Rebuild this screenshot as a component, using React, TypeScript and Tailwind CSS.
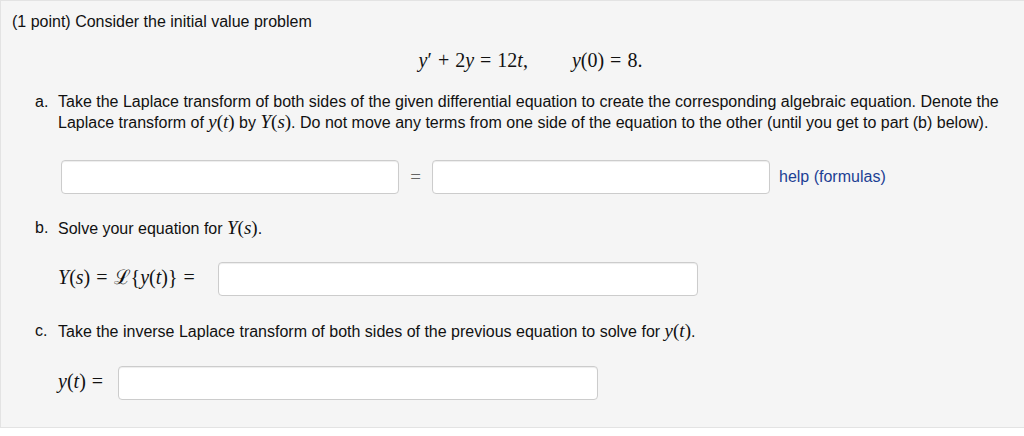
import React from 'react';

const serif = "font-['Liberation_Serif','DejaVu_Serif',serif]";

function V({ children }: { children: React.ReactNode }) {
  return <i className="italic">{children}</i>;
}

function Op({ children }: { children: React.ReactNode }) {
  return <span className="mx-[6px]">{children}</span>;
}

function Math({ children, className = '' }: { children: React.ReactNode; className?: string }) {
  return <span className={`${serif} text-[19px] leading-none whitespace-nowrap ${className}`}>{children}</span>;
}

function Field({ className = '' }: { className?: string }) {
  return (
    <input
      type="text"
      className={`h-[34px] bg-white border border-[#cccccc] rounded-[4px] shadow-[inset_0_1px_1px_rgba(0,0,0,0.075)] outline-none ${className}`}
    />
  );
}

export default function App() {
  return (
    <div className="w-[1024px] h-[436px] bg-white font-['Liberation_Sans',Arial,sans-serif] text-[16px] text-[#111]">
      <div className="h-[428px] bg-[#f5f5f5] border-l border-t border-b border-[#e3e3e3] pl-[11px] pt-[11px]">
        <p className="h-5 leading-5">(1 point) Consider the initial value problem</p>

        <div className="mt-[16px] h-6 flex items-center justify-center pl-[25px]">
          <Math className="text-[20px]">
            <V>y</V>′<Op>+</Op>2<V>y</V><Op>=</Op>12<V>t</V>,
          </Math>
          <span className="w-[44px]" />
          <Math className="text-[20px]">
            <V>y</V>(0)<Op>=</Op>8.
          </Math>
        </div>

        <div className="mt-[20px] flex leading-5">
          <span className="w-[46px] pl-[23px] shrink-0">a.</span>
          <div>
            <p className="h-5">
              Take the Laplace transform of both sides of the given differential equation to create the corresponding algebraic equation. Denote the
            </p>
            <p className="h-5">
              Laplace transform of <Math><V>y</V>(<V>t</V>)</Math> by <Math><V>Y</V>(<V>s</V>)</Math>. Do not move any terms from one side of the equation to the other (until you get to part (b) below).
            </p>
          </div>
        </div>

        <div className="mt-[28px] ml-[49px] flex items-center">
          <Field className="w-[338px]" />
          <span className={`${serif} text-[19px] w-[33px] text-center text-[#666]`}>=</span>
          <Field className="w-[338px]" />
          <a className="ml-[9px] text-[#1c3f94]">help (formulas)</a>
        </div>

        <div className="mt-[24px] flex leading-5">
          <span className="w-[46px] pl-[23px] shrink-0">b.</span>
          <p className="h-5">
            Solve your equation for <Math><V>Y</V>(<V>s</V>)</Math>.
          </p>
        </div>

        <div className="mt-[24px] ml-[46px] flex items-center">
          <div className="w-[160px] shrink-0">
            <Math className="text-[20px]">
              <V>Y</V>(<V>s</V>)<Op>=</Op>ℒ{'{'}<V>y</V>(<V>t</V>){'}'}<Op>=</Op>
            </Math>
          </div>
          <Field className="w-[480px]" />
        </div>

        <div className="mt-[25px] flex leading-5">
          <span className="w-[46px] pl-[23px] shrink-0">c.</span>
          <p className="h-5">
            Take the inverse Laplace transform of both sides of the previous equation to solve for <Math><V>y</V>(<V>t</V>)</Math>.
          </p>
        </div>

        <div className="mt-[25px] ml-[46px] flex items-center">
          <div className="w-[60px] shrink-0">
            <Math className="text-[20px]">
              <V>y</V>(<V>t</V>)<Op>=</Op>
            </Math>
          </div>
          <Field className="w-[480px]" />
        </div>
      </div>
    </div>
  );
}
